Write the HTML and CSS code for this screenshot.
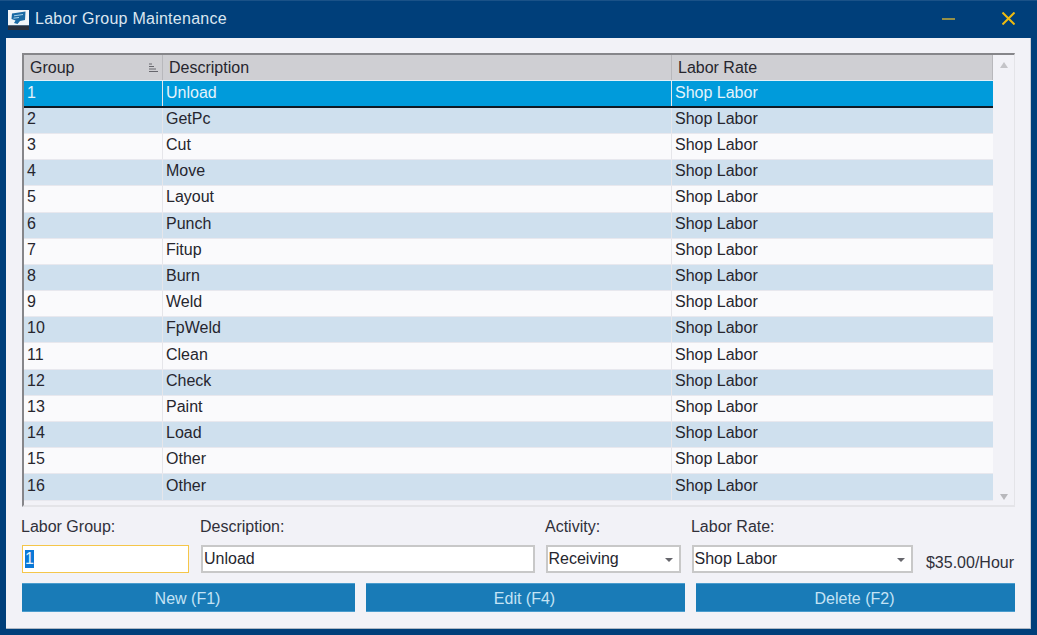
FILE: index.html
```html
<!DOCTYPE html>
<html lang="en">
<head>
<meta charset="utf-8">
<title>Labor Group Maintenance</title>
<link rel="stylesheet" href="styles.css">
</head>
<body>
<div class="window">
  <header class="titlebar">
    <svg class="app-icon" width="21" height="20" viewBox="0 0 21 20"><rect x="0" y="0" width="21" height="15.5" fill="#f2f5f8"/><rect x="0" y="15.5" width="21" height="4.5" fill="#2a2f3a"/><path d="M4 3.5 L17.5 1.5 L17 10 L12 11 L9.5 14 L6 13 L7.5 10.5 L3.5 9 Z" fill="#1b6aa4"/><path d="M6 5.8 L15 4.5 M5.5 8.2 L11 7.5" stroke="#a9d3ec" stroke-width="1"/></svg>
    <span class="title">Labor Group Maintenance</span>
    <svg class="win-btn min" width="13" height="14" viewBox="0 0 13 14"><path d="M0 7H13" stroke="#e6bd2e" stroke-width="1.3"/></svg>
    <svg class="win-btn close" width="13" height="13" viewBox="0 0 13 13"><path d="M.5 .5L12.5 12.5M12.5 .5L.5 12.5" stroke="#eebb10" stroke-width="2"/></svg>
  </header>
  <main class="panel">
    <section class="grid">
      <div class="grid-main">
        <div class="row head">
          <div class="cell c1"><span>Group</span><svg class="sort" width="11" height="10" viewBox="0 0 11 10"><path d="M1 1H4M1 3.5H6M1 6H8M1 8.5H10" stroke="#66666c" stroke-width="1"/></svg></div>
          <div class="cell c2">Description</div>
          <div class="cell c3">Labor Rate</div>
        </div>
        <div class="row sel"><div class="cell c1">1</div><div class="cell c2">Unload</div><div class="cell c3">Shop Labor</div></div>
        <div class="row alt"><div class="cell c1">2</div><div class="cell c2">GetPc</div><div class="cell c3">Shop Labor</div></div>
        <div class="row"><div class="cell c1">3</div><div class="cell c2">Cut</div><div class="cell c3">Shop Labor</div></div>
        <div class="row alt"><div class="cell c1">4</div><div class="cell c2">Move</div><div class="cell c3">Shop Labor</div></div>
        <div class="row"><div class="cell c1">5</div><div class="cell c2">Layout</div><div class="cell c3">Shop Labor</div></div>
        <div class="row alt"><div class="cell c1">6</div><div class="cell c2">Punch</div><div class="cell c3">Shop Labor</div></div>
        <div class="row"><div class="cell c1">7</div><div class="cell c2">Fitup</div><div class="cell c3">Shop Labor</div></div>
        <div class="row alt"><div class="cell c1">8</div><div class="cell c2">Burn</div><div class="cell c3">Shop Labor</div></div>
        <div class="row"><div class="cell c1">9</div><div class="cell c2">Weld</div><div class="cell c3">Shop Labor</div></div>
        <div class="row alt"><div class="cell c1">10</div><div class="cell c2">FpWeld</div><div class="cell c3">Shop Labor</div></div>
        <div class="row"><div class="cell c1">11</div><div class="cell c2">Clean</div><div class="cell c3">Shop Labor</div></div>
        <div class="row alt"><div class="cell c1">12</div><div class="cell c2">Check</div><div class="cell c3">Shop Labor</div></div>
        <div class="row"><div class="cell c1">13</div><div class="cell c2">Paint</div><div class="cell c3">Shop Labor</div></div>
        <div class="row alt"><div class="cell c1">14</div><div class="cell c2">Load</div><div class="cell c3">Shop Labor</div></div>
        <div class="row"><div class="cell c1">15</div><div class="cell c2">Other</div><div class="cell c3">Shop Labor</div></div>
        <div class="row alt"><div class="cell c1">16</div><div class="cell c2">Other</div><div class="cell c3">Shop Labor</div></div>
      </div>
      <div class="scrollbar">
        <span class="arrow up"></span>
        <span class="arrow down"></span>
      </div>
    </section>
    <section class="form">
      <div class="field f-group"><label>Labor Group:</label><div class="box focus"><span class="selected">1</span></div></div>
      <div class="field f-desc"><label>Description:</label><div class="box">Unload</div></div>
      <div class="field f-act"><label>Activity:</label><div class="box combo"><span>Receiving</span><i class="caret"></i></div></div>
      <div class="field f-rate"><label>Labor Rate:</label><div class="box combo"><span>Shop Labor</span><i class="caret"></i></div></div>
      <div class="price">$35.00/Hour</div>
    </section>
    <section class="buttons">
      <button class="btn b-new">New (F1)</button>
      <button class="btn b-edit">Edit (F4)</button>
      <button class="btn b-del">Delete (F2)</button>
    </section>
  </main>
</div>
</body>
</html>
```
FILE: styles.css
```css
* { box-sizing: border-box; }
html, body { margin: 0; padding: 0; }
body {
  width: 1037px;
  height: 635px;
  overflow: hidden;
  background: #003f7a;
  font-family: "Liberation Sans", Arial, sans-serif;
  font-size: 16px;
  color: #26262e;
}
.window { height: 635px; display: flex; flex-direction: column; }
.titlebar {
  height: 38px;
  flex: none;
  display: flex;
  align-items: center;
  padding: 0 22px 2px 8px;
  background: #003f7a;
  border-top: 1px solid #1a5288;
}
.app-icon { margin-right: 6px; margin-top: 2px; }
.title { flex: 1; color: #dbe6f0; font-size: 16px; letter-spacing: .26px; }
.win-btn.min { margin-right: 47px; }
.panel {
  width: 1025px;
  height: 591px;
  flex: none;
  margin-left: 6px;
  padding: 15px 16px 0 16px;
  background: #f2f2f7;
  border-right: 1px solid #c8ccd4;
  border-bottom: 1px solid #b0b8c4;
  display: flex;
  flex-direction: column;
}
.grid {
  height: 454px;
  display: flex;
  border-top: 2px solid #86868a;
  border-left: 2px solid #86868a;
  border-right: 1px solid #e4e4e8;
  border-bottom: 2px solid #e4e4e8;
  width: 993px;
  flex: none;
}
.grid-main { width: 969px; flex: none; }
.row { display: flex; height: 26.2px; background: #fafafc; border-bottom: 1px solid #e8e8ee; }
.row.alt { background: #cfe0ee; }
.row.head { height: 26px; background: #cfcfd3; border-bottom: 1px solid #e4f0f8; }
.row.sel { height: 26.8px; background: #009bdb; color: #e4f3fb; border-bottom: 2px solid #101a24; }
.cell { display: flex; align-items: center; padding-left: 3px; padding-bottom: 3px; border-right: 1px solid #e6e6ea; white-space: nowrap; }
.sel .cell { padding-bottom: 1px; }
.c1 { width: 139px; }
.c2 { width: 509px; padding-left: 3px; }
.c3 { width: 321px; padding-left: 3px; border-right: none; }
.head .cell { padding-left: 6px; padding-bottom: 0; border-right: 1px solid #b8b8bc; }
.head .c1 { justify-content: space-between; padding-right: 3px; }
.head .c3 { border-right: 1px solid #b8b8bc; }
.sort { margin-top: 0; }
.scrollbar { flex: 1; display: flex; flex-direction: column; justify-content: space-between; align-items: center; padding: 7px 0 5px; }
.arrow { width: 0; height: 0; border-left: 4px solid transparent; border-right: 4px solid transparent; }
.arrow.up { border-bottom: 6px solid #c4c4c8; }
.arrow.down { border-top: 6px solid #b8b8bc; }
.form { display: flex; margin-top: 9px; height: 66px; flex: none; }
.field { display: flex; flex-direction: column; }
.field label { height: 29px; padding-top: 1px; margin-left: -1px; color: #30303a; line-height: 20px; }
.box {
  height: 28px;
  background: #fff;
  border: 2px solid #c8c8c8;
  display: flex;
  align-items: center;
  padding-left: 1px;
  padding-bottom: 1px;
}
.box.focus { border: 1.5px solid #f5c64a; }
.selected { background: #0a78d7; color: #e8f3fb; line-height: 18px; margin-left: 1px; }
.combo { justify-content: space-between; padding-left: .5px; padding-right: 6px; }
.caret { width: 0; height: 0; margin-top: 2px; border-left: 4px solid transparent; border-right: 4px solid transparent; border-top: 4px solid #66666c; }
.f-group { width: 167px; margin-right: 12px; }
.f-desc { width: 334px; margin-right: 11px; }
.f-act { width: 135px; margin-right: 11px; }
.f-rate { width: 221px; margin-right: 13px; }
.price { padding-top: 38px; white-space: nowrap; color: #30303a; }
.buttons { display: flex; gap: 11px; margin-top: 1px; flex: none; }
.btn {
  height: 29px;
  border: 0;
  border-top: 1px solid #4a9ccd;
  border-bottom: 1px solid #4a9ccd;
  background: #197bb7;
  color: #c4e3f5;
  font: inherit;
  padding: 2px 2px 0 0;
}
.b-new { width: 333px; flex: none; }
.b-edit { width: 319px; flex: none; }
.b-del { width: 319px; flex: none; }
```
